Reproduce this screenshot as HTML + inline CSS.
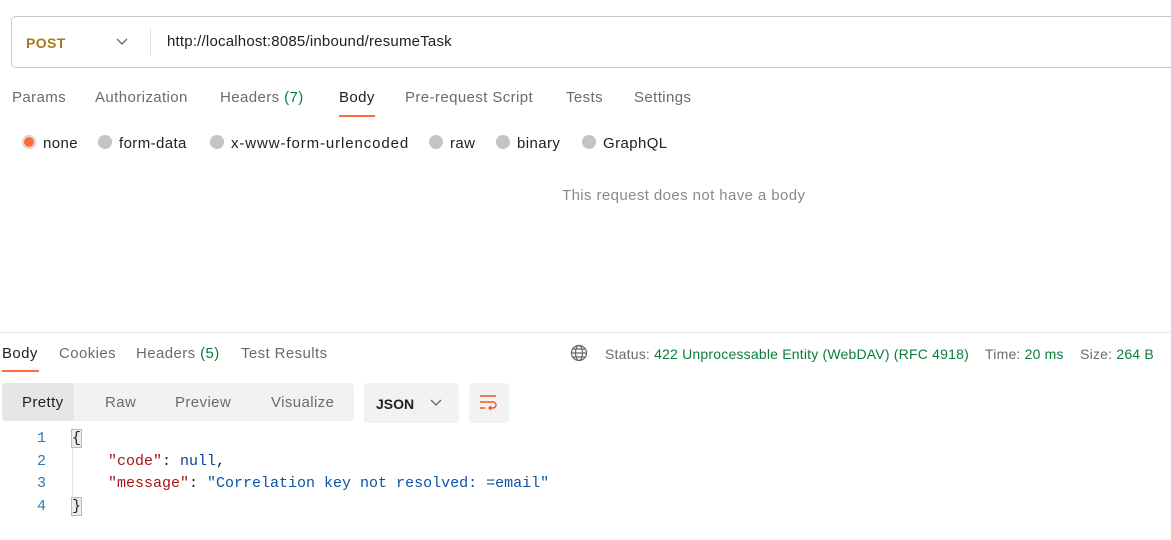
<!DOCTYPE html>
<html><head><style>
body{margin:0;width:1171px;height:540px;background:#fff;font-family:"Liberation Sans",sans-serif;font-size:14px;color:#212121;position:relative;overflow:hidden}
.a{position:absolute;white-space:nowrap}
.t{font-size:15px;letter-spacing:0.4px}
.g{color:#6b6b6b}
.dot{position:absolute;width:14px;height:14px;border-radius:50%;background:#c4c4c4}
.mono{font-family:"Liberation Mono",monospace;font-size:15px}
</style></head><body>
<div class="a" style="left:11px;top:16px;width:1170px;height:50px;border:1px solid #c8c8c8;border-radius:5px"></div>
<div class="a" style="left:26px;top:35px;font-weight:bold;color:#a8791c;letter-spacing:0.4px">POST</div>
<svg class="a" style="left:116px;top:38px" width="12" height="8"><path d="M1 1l5 5 5-5" stroke="#666" fill="none" stroke-width="1.3"/></svg>
<div class="a" style="left:150px;top:28px;width:1px;height:28px;background:#e0e0e0"></div>
<div class="a t" style="left:167px;top:33px;letter-spacing:0.2px">http://localhost:8085/inbound/resumeTask</div>

<div class="a g t" style="left:12px;top:89px">Params</div>
<div class="a g t" style="left:95px;top:89px">Authorization</div>
<div class="a g t" style="left:220px;top:89px">Headers <span style="color:#0a7d3b">(7)</span></div>
<div class="a t" style="left:339px;top:89px">Body</div>
<div class="a" style="left:339px;top:115px;width:36px;height:2px;background:#ff6c37"></div>
<div class="a g t" style="left:405px;top:89px">Pre-request Script</div>
<div class="a g t" style="left:566px;top:89px">Tests</div>
<div class="a g t" style="left:634px;top:89px">Settings</div>

<div class="dot" style="left:22px;top:135px;background:#ff6c37;box-shadow:0 0 0 2px #ddd inset"></div>
<div class="a t" style="left:43px;top:135px">none</div>
<div class="dot" style="left:98px;top:135px"></div><div class="a t" style="left:119px;top:135px">form-data</div>
<div class="dot" style="left:210px;top:135px"></div><div class="a t" style="left:231px;top:135px;letter-spacing:0.9px">x-www-form-urlencoded</div>
<div class="dot" style="left:429px;top:135px"></div><div class="a t" style="left:450px;top:135px">raw</div>
<div class="dot" style="left:496px;top:135px"></div><div class="a t" style="left:517px;top:135px">binary</div>
<div class="dot" style="left:582px;top:135px"></div><div class="a t" style="left:603px;top:135px">GraphQL</div>

<div class="a t" style="left:562px;top:187px;color:#8a8a8a">This request does not have a body</div>

<div class="a" style="left:0;top:332px;width:1171px;height:1px;background:#e8e8e8"></div>
<div class="a t" style="left:2px;top:345px">Body</div>
<div class="a" style="left:2px;top:370px;width:37px;height:2px;background:#ff6c37"></div>
<div class="a g t" style="left:59px;top:345px">Cookies</div>
<div class="a g t" style="left:136px;top:345px">Headers <span style="color:#0a7d3b">(5)</span></div>
<div class="a g t" style="left:241px;top:345px">Test Results</div>
<svg class="a" style="left:570px;top:344px" width="18" height="18" fill="none" stroke="#666" stroke-width="1.2"><circle cx="9" cy="9" r="7.5"/><ellipse cx="9" cy="9" rx="3.5" ry="7.5"/><path d="M1.5 9h15M3 5h12M3 13h12"/></svg>
<div class="a g" style="left:605px;top:346px;letter-spacing:0.2px">Status: <span style="color:#0a7d3b">422 Unprocessable Entity (WebDAV) (RFC 4918)</span>&nbsp;&nbsp;&nbsp; Time: <span style="color:#0a7d3b">20 ms</span>&nbsp;&nbsp;&nbsp; Size: <span style="color:#0a7d3b">264 B</span></div>

<div class="a" style="left:2px;top:383px;width:352px;height:38px;background:#f2f2f2;border-radius:4px"></div>
<div class="a" style="left:2px;top:383px;width:72px;height:38px;background:#e6e6e6;border-radius:4px 0 0 4px"></div>
<div class="a t" style="left:22px;top:394px">Pretty</div>
<div class="a g t" style="left:105px;top:394px">Raw</div>
<div class="a g t" style="left:175px;top:394px">Preview</div>
<div class="a g t" style="left:271px;top:394px">Visualize</div>
<div class="a" style="left:364px;top:383px;width:95px;height:40px;background:#f2f2f2;border-radius:4px"></div>
<div class="a" style="left:376px;top:396px;font-weight:bold;font-size:14px">JSON</div>
<svg class="a" style="left:430px;top:399px" width="12" height="8"><path d="M1 1l5 5 5-5" stroke="#666" fill="none" stroke-width="1.3"/></svg>
<div class="a" style="left:469px;top:383px;width:40px;height:40px;background:#f2f2f2;border-radius:4px"></div>
<svg class="a" style="left:479px;top:393px" width="20" height="20" fill="none" stroke="#e8562a" stroke-width="1.4"><path d="M1 3h16M1 9h13a3 3 0 0 1 0 6h-4M12 13l-2 2 2 2M1 15h5"/></svg>

<div class="a" style="left:72px;top:428px;width:1px;height:90px;background:#e6e6e6"></div>
<div class="a mono" style="left:37px;top:430px;color:#2a7ab0">1</div>
<div class="a mono" style="left:37px;top:453px;color:#2a7ab0">2</div>
<div class="a mono" style="left:37px;top:475px;color:#2a7ab0">3</div>
<div class="a mono" style="left:37px;top:498px;color:#2a7ab0">4</div>
<div class="a mono" style="left:72px;top:430px;background:#e8efe6;outline:1px solid #bbb">{</div>
<div class="a mono" style="left:108px;top:453px"><span style="color:#a31515">"code"</span>: <span style="color:#0b3fa8">null</span>,</div>
<div class="a mono" style="left:108px;top:475px"><span style="color:#a31515">"message"</span>: <span style="color:#0b53a8">"Correlation key not resolved: =email"</span></div>
<div class="a mono" style="left:72px;top:498px;background:#e8efe6;outline:1px solid #bbb">}</div>
</body></html>
